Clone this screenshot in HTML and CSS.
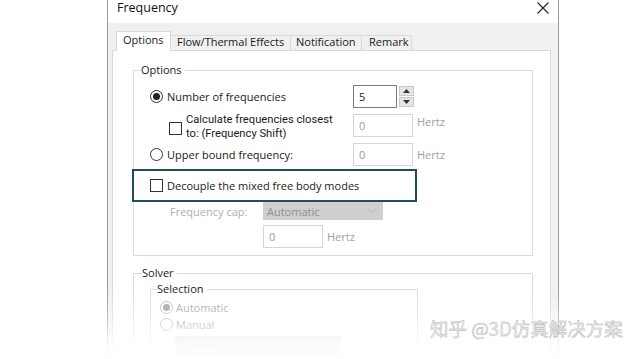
FILE: index.html
```html
<!DOCTYPE html>
<html>
<head>
<meta charset="utf-8">
<link rel="stylesheet" href="styles.css">
</head>
<body>
<div class="dialog">
  <div class="titlebar">
    <span class="title">Frequency</span>
    <svg class="close" width="12" height="12" viewBox="0 0 12 12"><path d="M0.5 0.5 L11.5 11.5 M11.5 0.5 L0.5 11.5" stroke="#222" stroke-width="1.1" fill="none"/></svg>
  </div>
  <div class="body">
    <div class="tabs">
      <div class="tab active">Options</div>
      <div class="tab t-flow">Flow/Thermal Effects</div>
      <div class="tab t-notif">Notification</div>
      <div class="tab t-remark">Remark</div>
    </div>
    <div class="panel">
      <div class="group g-options">
        <div class="ghead"><span class="glabel">Options</span></div>
        <div class="gbody opts">
          <div class="row r1">
            <div class="lcol"><span class="radio checked"></span><span class="txt">Number of frequencies</span></div>
            <div class="input dark">5</div>
            <div class="spin"><span class="sb"><svg width="7" height="4" viewBox="0 0 7 4"><path d="M0 4 L3.5 0 L7 4Z" fill="#333"/></svg></span><span class="sb"><svg width="7" height="4" viewBox="0 0 7 4"><path d="M0 0 L3.5 4 L7 0Z" fill="#333"/></svg></span></div>
          </div>
          <div class="row r2">
            <div class="lcol lcol2"><span class="check"></span><span class="txt two"><span class="ln">Calculate frequencies closest</span><span class="ln">to: (Frequency Shift)</span></span></div>
            <div class="input">0</div><span class="hz">Hertz</span>
          </div>
          <div class="row r3">
            <div class="lcol"><span class="radio"></span><span class="txt">Upper bound frequency:</span></div>
            <div class="input">0</div><span class="hz">Hertz</span>
          </div>
          <div class="highlight"><span class="check"></span><span class="txt">Decouple the mixed free body modes</span></div>
          <div class="row r5">
            <span class="cap">Frequency cap:</span>
            <div class="select"><span>Automatic</span><svg width="10" height="6" viewBox="0 0 10 6"><path d="M0.5 0.5 L5 5 L9.5 0.5" stroke="#bdbdbd" fill="none"/></svg></div>
          </div>
          <div class="row r6">
            <div class="input">0</div><span class="hz">Hertz</span>
          </div>
        </div>
      </div>
      <div class="group g-solver">
        <div class="ghead"><span class="glabel">Solver</span></div>
        <div class="gbody solver">
          <div class="group g-sel">
            <div class="ghead"><span class="glabel">Selection</span></div>
            <div class="gbody sel">
              <div class="srow"><span class="radio checked dis"></span><span class="txt dtxt">Automatic</span></div>
              <div class="srow"><span class="radio dis"></span><span class="txt dtxt">Manual</span></div>
              <div class="fbar">Sparse</div>
            </div>
          </div>
        </div>
      </div>
    </div>
  </div>
</div>
<div class="fade"></div>
<div class="watermark">知乎 @3D仿真解决方案</div>
</body>
</html>
```
FILE: styles.css
```css
html, body {
  margin: 0;
  padding: 0;
  background: #fff;
  width: 640px;
  height: 359px;
  overflow: hidden;
  font-family: "Open Sans", "Noto Sans", sans-serif;
  font-size: 11px;
  color: #1a1a1a;
}
.dialog {
  margin-left: 107px;
  width: 450px;
  height: 359px;
  overflow: hidden;
  border-left: 1px solid #9a9a9a;
  border-right: 1px solid #9a9a9a;
  background: #f0f0f0;
}
.titlebar {
  height: 23px;
  background: #fff;
  display: flex;
  justify-content: space-between;
  align-items: flex-start;
  padding: 0 8px 0 9px;
}
.title {
  font-size: 12.5px;
  line-height: 16px;
  color: #111;
}
.close { margin-top: 2px; margin-right: 1px; }
.body {
  padding: 8px 7px 0 4px;
}
.tabs {
  display: flex;
  align-items: flex-end;
  height: 19px;
  padding-left: 4px;
  position: relative;
  z-index: 1;
}
.tab {
  height: 15px;
  line-height: 12px;
  border: 1px solid #d9d9d9;
  border-bottom: none;
  border-left: none;
  background: #f0f0f0;
  padding: 0 5px;
  box-sizing: border-box;
  color: #1a1a1a;
  white-space: nowrap;
}
.tab.active {
  height: 20px;
  line-height: 16px;
  background: #fff;
  border-left: 1px solid #d9d9d9;
  width: 55px;
  padding: 0 0 0 6px;
  margin-bottom: -1px;
}
.t-flow { width: 120px; padding-left: 6px; }
.t-notif { width: 71px; padding-left: 5px; }
.t-remark { width: 50px; padding-left: 7px; }
.panel {
  border: 1px solid #d9d9d9;
  background: #fff;
  height: 320px;
  padding: 0 17px 0 20px;
}
.group { display: flex; flex-direction: column; }
.ghead {
  display: flex;
  height: 16px;
  line-height: 16px;
}
.ghead::before, .ghead::after {
  content: "";
  height: 8px;
  align-self: flex-end;
  border-top: 1px solid #dcdcdc;
  box-sizing: border-box;
}
.ghead::before { width: 8px; border-left: 1px solid #dcdcdc; }
.ghead::after { flex: 1; border-right: 1px solid #dcdcdc; }
.glabel { padding-right: 3px; color: #1a1a1a; font-size: 11px; }
.gbody {
  border: 1px solid #dcdcdc;
  border-top: none;
}
.g-options { margin-top: 11px; }
.opts { padding: 7px 0 7px 16px; }
.row { display: flex; align-items: center; height: 23px; }
.lcol { width: 203px; display: flex; align-items: center; }
.txt { margin-left: 4px; white-space: nowrap; }
.radio {
  width: 13px;
  height: 13px;
  border: 1px solid #333;
  border-radius: 50%;
  box-sizing: border-box;
  background: #fff;
  display: flex;
  align-items: center;
  justify-content: center;
  flex: none;
}
.radio.checked::after {
  content: "";
  width: 7px;
  height: 7px;
  border-radius: 50%;
  background: #222;
}
.radio.dis { border-color: #b5b5b5; }
.radio.dis.checked::after { background: #9a9a9a; }
.check {
  width: 13px;
  height: 13px;
  border: 1px solid #333;
  box-sizing: border-box;
  background: #fff;
  flex: none;
}
.input {
  width: 60px;
  height: 23px;
  box-sizing: border-box;
  border: 1px solid #d5d5d5;
  color: #9a9a9a;
  padding-left: 5px;
  line-height: 21px;
}
.input.dark { width: 44px; border-color: #7a7a7a; color: #1a1a1a; }
.spin {
  margin-left: 2px;
  display: flex;
  flex-direction: column;
  gap: 1px;
}
.sb {
  width: 15px;
  height: 10px;
  background: #e5e5e5;
  border: 1px solid #c9c9c9;
  box-sizing: border-box;
  display: flex;
  align-items: center;
  justify-content: center;
}
.hz { margin-left: 4px; color: #a0a0a0; }
.r2 { margin-top: 6px; align-items: flex-start; }
.lcol2 { align-items: flex-start; padding-left: 19px; box-sizing: border-box; }
.lcol2 .check { margin-top: 8px; }
.two {
  display: flex;
  flex-direction: column;
  margin-top: -1px;
  font-family: Roboto, "Open Sans", sans-serif;
  font-size: 11.2px;
}
.ln { display: block; height: 14px; line-height: 14px; }
.r3 { margin-top: 6px; }
.highlight {
  margin-top: 3px;
  margin-left: -18px;
  width: 285px;
  height: 33px;
  box-sizing: border-box;
  border: 2px solid #1f4d5f;
  display: flex;
  align-items: center;
  padding-left: 16px;
}
.r5 { height: 18px; margin-top: 0; }
.cap { width: 93px; padding-left: 20px; color: #b0b0b0; }
.select {
  width: 120px;
  height: 18px;
  background: #cfcfcf;
  display: flex;
  align-items: center;
  justify-content: space-between;
  padding: 0 6px 0 4px;
  box-sizing: border-box;
  color: #8f8f8f;
}
.r6 { margin-top: 5px; padding-left: 113px; }
.g-solver { margin-top: 9px; }
.g-solver .ghead::before { width: 9px; }
.solver { padding: 0 0 0 16px; height: 120px; }
.g-sel { width: 268px; }
.g-sel .ghead::before { width: 7px; }
.sel { padding: 2px 0 0 9px; height: 100px; }
.srow { display: flex; align-items: center; height: 17px; }
.dtxt { color: #9c9c9c; margin-left: 3px; }
.fbar {
  margin-top: 3px;
  margin-left: 15px;
  width: 160px;
  height: 20px;
  background: #dedede;
  color: #b5b5b5;
  padding-left: 6px;
  line-height: 20px;
}
.fade {
  position: absolute;
  left: 0;
  top: 290px;
  width: 640px;
  height: 69px;
  background: linear-gradient(to bottom, rgba(255,255,255,0) 0%, rgba(255,255,255,0.45) 45%, rgba(255,255,255,0.9) 80%, rgba(255,255,255,0.97) 100%);
}
.watermark {
  position: absolute;
  left: 430px;
  top: 315px;
  font-family: "Noto Sans CJK SC", "Noto Sans", sans-serif;
  font-size: 18.5px;
  line-height: 26px;
  color: #ececec;
  -webkit-text-stroke: 0.4px #b0b0b0;
  white-space: nowrap;
}
```
